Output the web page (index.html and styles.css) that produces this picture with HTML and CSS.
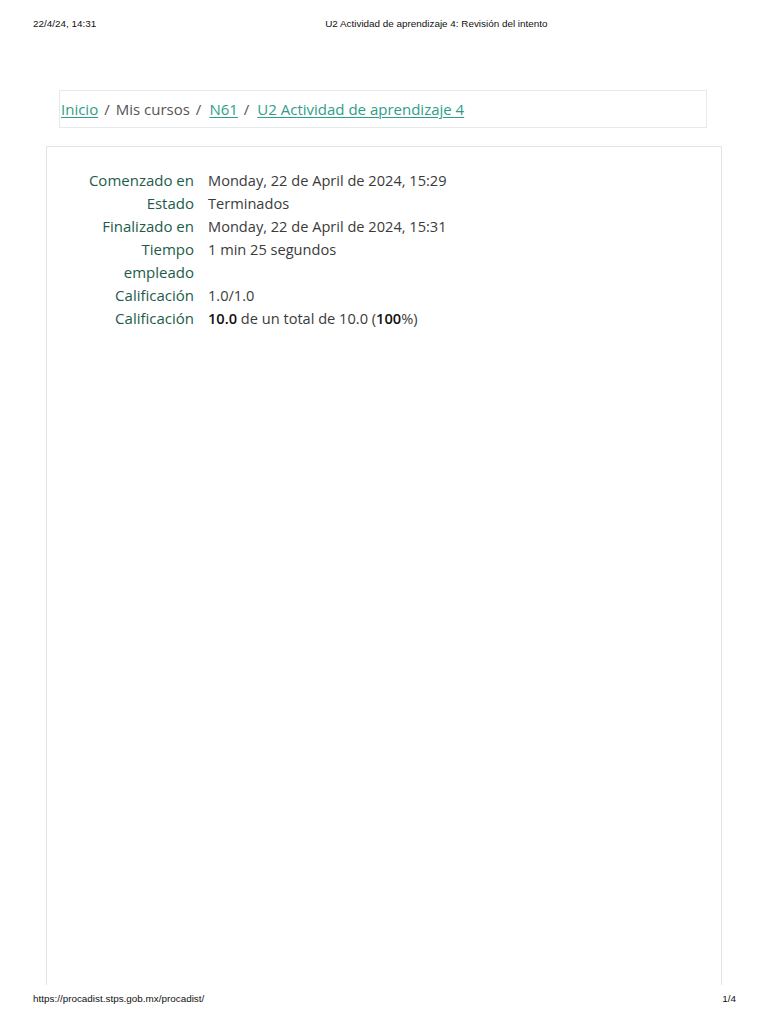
FILE: index.html
```html
<!DOCTYPE html>
<html lang="es">
<head>
<meta charset="utf-8">
<title>U2 Actividad de aprendizaje 4: Revisión del intento</title>
<link rel="stylesheet" href="styles.css">
</head>
<body>
<div class="page">
  <header class="print-head">
    <span class="date">22/4/24, 14:31</span>
    <span class="doc-title">U2 Actividad de aprendizaje 4: Revisión del intento</span>
  </header>

  <nav class="breadcrumb">
    <a href="#" class="crumb-link">Inicio</a><span class="sep">/</span><span class="crumb">Mis cursos</span><span class="sep">/</span><a href="#" class="crumb-link gap">N61</a><span class="sep">/</span><a href="#" class="crumb-link gap">U2 Actividad de aprendizaje 4</a>
  </nav>

  <section class="card">
    <dl class="summary">
      <dt>Comenzado en</dt><dd>Monday, 22 de April de 2024, 15:29</dd>
      <dt>Estado</dt><dd>Terminados</dd>
      <dt>Finalizado en</dt><dd>Monday, 22 de April de 2024, 15:31</dd>
      <dt>Tiempo empleado</dt><dd>1 min 25 segundos</dd>
      <dt>Calificación</dt><dd>1.0/1.0</dd>
      <dt>Calificación</dt><dd><b>10.0</b> de un total de 10.0 (<b>100</b>%)</dd>
    </dl>
  </section>

  <footer class="print-foot">
    <span>https://procadist.stps.gob.mx/procadist/</span>
    <span>1/4</span>
  </footer>
</div>
</body>
</html>
```

FILE: styles.css
```css
html, body {
  margin: 0;
  padding: 0;
  background: #ffffff;
}

.page {
  width: 768px;
  height: 1024px;
  display: flex;
  flex-direction: column;
  overflow: hidden;
}

.print-head {
  display: flex;
  padding: 18px 33px 0 33px;
  height: 72px;
  box-sizing: border-box;
  font-family: "Liberation Sans", Arial, sans-serif;
  font-size: 9.9px;
  line-height: 12px;
  color: #111;
}

.doc-title {
  margin-left: 229px;
}

.breadcrumb {
  margin: 18px 0 0 59px;
  width: 648px;
  height: 38px;
  box-sizing: border-box;
  border: 1.5px solid #e6eaee;
  display: flex;
  align-items: center;
  padding-left: 1px;
  font-family: "Open Sans", "Noto Sans", sans-serif;
  font-size: 15px;
  color: #555;
  white-space: nowrap;
}

.crumb-link {
  color: #2f9e88;
  text-decoration: underline;
  text-underline-offset: 2px;
  text-decoration-thickness: 1px;
}

.crumb { color: #555; }

.sep {
  margin: 0 6px;
  color: #555;
}

.crumb-link.gap { margin-left: 2px; }

.card {
  margin: 18px 0 0 46px;
  width: 676px;
  height: 839px;
  box-sizing: border-box;
  border: 1px solid #e4e4e4;
  border-bottom: none;
  padding: 22px 0 0 36px;
}

.summary {
  margin: 0;
  display: grid;
  grid-template-columns: 111px 1fr;
  column-gap: 14px;
  font-family: "Open Sans", "Noto Sans", sans-serif;
  font-size: 15px;
  line-height: 23px;
}

.summary dt {
  text-align: right;
  color: #1d5c4a;
}

.summary dd {
  margin: 0;
  color: #3b3b3b;
  font-size: 14.6px;
}

.summary b {
  font-weight: 600;
  color: #111;
}

.print-foot {
  display: flex;
  justify-content: space-between;
  padding: 8px 32px 0 33px;
  font-family: "Liberation Sans", Arial, sans-serif;
  font-size: 9.9px;
  line-height: 12px;
  color: #111;
}
```
